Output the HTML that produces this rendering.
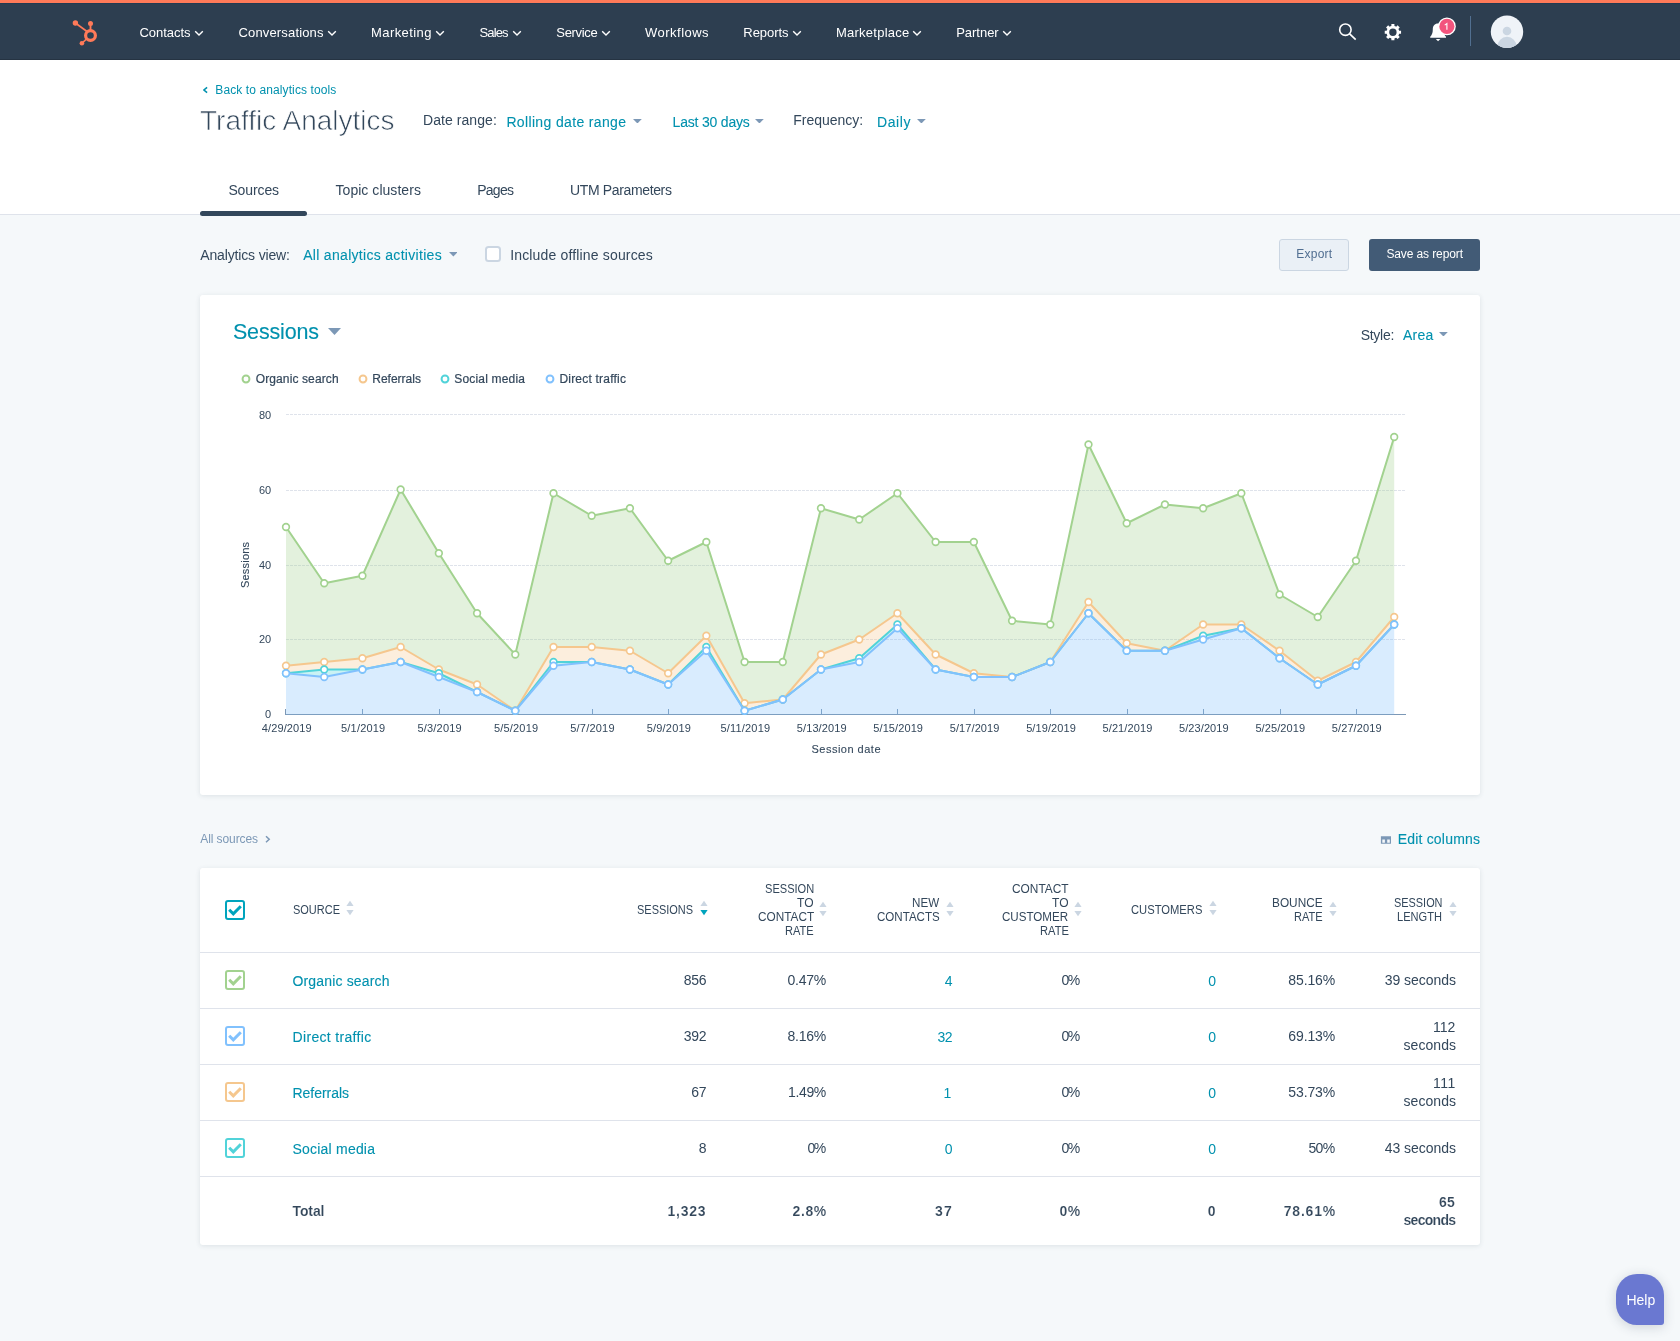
<!DOCTYPE html>
<html><head><meta charset="utf-8"><title>Traffic Analytics</title>
<style>
html,body{margin:0;padding:0}
body{width:1680px;height:1341px;background:#f5f8fa;position:relative;overflow:hidden;font-family:"Liberation Sans",sans-serif}
.t{position:absolute;white-space:nowrap;font-family:"Liberation Sans",sans-serif}
</style></head><body><div id="w" style="position:absolute;left:0;top:0;width:1680px;height:1341px;will-change:transform">
<div style="position:absolute;left:0;top:0;width:1680px;height:3px;background:#ff7a59"></div>
<div style="position:absolute;left:0;top:3px;width:1680px;height:57px;background:#2d3e50"></div>
<div style="position:absolute;left:0;top:3px;width:1680px;height:1px;background:#223a52"></div>
<div style="position:absolute;left:0;top:59px;width:1680px;height:1px;background:#253342"></div>
<svg style="position:absolute;left:60px;top:0" width="60" height="60" viewBox="60 0 60 60">
<g fill="#ff7a59" stroke="none">
<circle cx="75.4" cy="23" r="2.7"/><circle cx="90.5" cy="23.4" r="2.5"/><circle cx="81.9" cy="43.3" r="2.3"/>
</g>
<g stroke="#ff7a59" fill="none">
<circle cx="90.5" cy="35.5" r="4.9" stroke-width="3.2"/>
<line x1="75.4" y1="23" x2="87" y2="31.5" stroke-width="1.7"/>
<line x1="90.5" y1="23.4" x2="90.5" y2="30" stroke-width="1.9"/>
<line x1="81.9" y1="43.3" x2="86.5" y2="39" stroke-width="1.7"/>
</g></svg>
<div class="t" style="left:139.50px;top:23.60px;font-size:13px;line-height:17px;color:#ffffff;letter-spacing:-0.043px;">Contacts</div>
<svg style="position:absolute;left:194px;top:29px" width="10" height="8" viewBox="0 0 10 8"><path d="M1.2 2.2 L5 6 L8.8 2.2" fill="none" stroke="#ffffff" stroke-width="1.4"/></svg>
<div class="t" style="left:238.50px;top:23.60px;font-size:13px;line-height:17px;color:#ffffff;letter-spacing:0.159px;">Conversations</div>
<svg style="position:absolute;left:327px;top:29px" width="10" height="8" viewBox="0 0 10 8"><path d="M1.2 2.2 L5 6 L8.8 2.2" fill="none" stroke="#ffffff" stroke-width="1.4"/></svg>
<div class="t" style="left:371.00px;top:23.60px;font-size:13px;line-height:17px;color:#ffffff;letter-spacing:0.427px;">Marketing</div>
<svg style="position:absolute;left:435px;top:29px" width="10" height="8" viewBox="0 0 10 8"><path d="M1.2 2.2 L5 6 L8.8 2.2" fill="none" stroke="#ffffff" stroke-width="1.4"/></svg>
<div class="t" style="left:479.50px;top:23.60px;font-size:13px;line-height:17px;color:#ffffff;letter-spacing:-0.878px;">Sales</div>
<svg style="position:absolute;left:512px;top:29px" width="10" height="8" viewBox="0 0 10 8"><path d="M1.2 2.2 L5 6 L8.8 2.2" fill="none" stroke="#ffffff" stroke-width="1.4"/></svg>
<div class="t" style="left:556.30px;top:23.60px;font-size:13px;line-height:17px;color:#ffffff;letter-spacing:-0.326px;">Service</div>
<svg style="position:absolute;left:601.2px;top:29px" width="10" height="8" viewBox="0 0 10 8"><path d="M1.2 2.2 L5 6 L8.8 2.2" fill="none" stroke="#ffffff" stroke-width="1.4"/></svg>
<div class="t" style="left:645.00px;top:23.60px;font-size:13px;line-height:17px;color:#ffffff;letter-spacing:0.486px;">Workflows</div>
<div class="t" style="left:743.30px;top:23.60px;font-size:13px;line-height:17px;color:#ffffff;letter-spacing:-0.052px;">Reports</div>
<svg style="position:absolute;left:792.2px;top:29px" width="10" height="8" viewBox="0 0 10 8"><path d="M1.2 2.2 L5 6 L8.8 2.2" fill="none" stroke="#ffffff" stroke-width="1.4"/></svg>
<div class="t" style="left:836.00px;top:23.60px;font-size:13px;line-height:17px;color:#ffffff;letter-spacing:0.239px;">Marketplace</div>
<svg style="position:absolute;left:912.4px;top:29px" width="10" height="8" viewBox="0 0 10 8"><path d="M1.2 2.2 L5 6 L8.8 2.2" fill="none" stroke="#ffffff" stroke-width="1.4"/></svg>
<div class="t" style="left:956.20px;top:23.60px;font-size:13px;line-height:17px;color:#ffffff;letter-spacing:-0.021px;">Partner</div>
<svg style="position:absolute;left:1002.2px;top:29px" width="10" height="8" viewBox="0 0 10 8"><path d="M1.2 2.2 L5 6 L8.8 2.2" fill="none" stroke="#ffffff" stroke-width="1.4"/></svg>
<svg style="position:absolute;left:1330px;top:15px" width="34" height="34" viewBox="1330 15 34 34">
<circle cx="1345.400" cy="29.700" r="5.700" fill="none" stroke="#fff" stroke-width="1.600"/>
<line x1="1349.400" y1="33.700" x2="1355.700" y2="39.600" stroke="#fff" stroke-width="1.700" stroke-linecap="butt"/></svg>
<svg style="position:absolute;left:1380px;top:20px" width="26" height="26" viewBox="1380 20 26 26"><path d="M1390.45 26.29 L1391.36 25.99 L1391.39 24.04 L1394.41 24.04 L1394.44 25.99 L1395.35 26.29 L1395.35 26.29 L1396.20 26.72 L1397.61 25.36 L1399.74 27.49 L1398.38 28.90 L1398.81 29.75 L1398.81 29.75 L1399.11 30.66 L1401.06 30.69 L1401.06 33.71 L1399.11 33.74 L1398.81 34.65 L1398.81 34.65 L1398.38 35.50 L1399.74 36.91 L1397.61 39.04 L1396.20 37.68 L1395.35 38.11 L1395.35 38.11 L1394.44 38.41 L1394.41 40.36 L1391.39 40.36 L1391.36 38.41 L1390.45 38.11 L1390.45 38.11 L1389.60 37.68 L1388.19 39.04 L1386.06 36.91 L1387.42 35.50 L1386.99 34.65 L1386.99 34.65 L1386.69 33.74 L1384.74 33.71 L1384.74 30.69 L1386.69 30.66 L1386.99 29.75 L1386.99 29.75 L1387.42 28.90 L1386.06 27.49 L1388.19 25.36 L1389.60 26.72 L1390.45 26.29Z M1389.20 32.20 a3.7 3.7 0 1 0 7.4 0 a3.7 3.7 0 1 0 -7.4 0Z" fill="#fff" fill-rule="evenodd"/></svg>
<svg style="position:absolute;left:1425px;top:15px" width="34" height="34" viewBox="1425 15 34 34">
<path d="M1438.1 23.6 c-3.6 0 -5.3 2.7 -5.3 5.8 c0 3.6 -1 5.6 -2.6 7.3 l0 1 l15.8 0 l0 -1 c-1.6 -1.7 -2.6 -3.700 -2.6 -7.3 c0 -3.1 -1.7 -5.8 -5.3 -5.8z" fill="#fff"/>
<path d="M1435.8 39 l4.6 0 l-2.3 2.300z" fill="#fff"/>
<circle cx="1446.9" cy="26.400" r="8.900" fill="#fff"/>
<circle cx="1446.9" cy="26.400" r="7.600" fill="#f2547d"/>
<path d="M1444.700 25.100 L1446.900 23.600 L1446.900 29.700" fill="none" stroke="#fff" stroke-width="1.100" stroke-linejoin="miter"/>
</svg>
<div style="position:absolute;left:1470px;top:16px;width:1px;height:30px;background:#516f90"></div>
<svg style="position:absolute;left:1490px;top:15px" width="34" height="34" viewBox="1490 15 34 34">
<defs><clipPath id="av"><circle cx="1507" cy="31.700" r="16.2"/></clipPath></defs>
<circle cx="1507" cy="31.700" r="16.2" fill="#eff3f8"/>
<g clip-path="url(#av)" fill="#cbd6e2"><circle cx="1507" cy="31" r="4.300"/><ellipse cx="1507" cy="46.600" rx="9.600" ry="9.800"/></g>
</svg>
<div style="position:absolute;left:0;top:60px;width:1680px;height:154px;background:#fff;border-bottom:1px solid #dfe3eb"></div>
<svg style="position:absolute;left:203px;top:85px" width="8" height="10" viewBox="0 0 8 10"><path d="M4.100 2.300 L0.900 5 L4.100 7.700" fill="none" stroke="#0091ae" stroke-width="1.600"/></svg>
<div class="t" style="left:215.30px;top:81.64px;font-size:12px;line-height:16px;color:#0091ae;letter-spacing:0.103px;">Back to analytics tools</div>
<div class="t" style="left:200.00px;top:102.50px;font-size:28px;line-height:36px;color:#33475b;letter-spacing:-0.001px;-webkit-text-stroke:0.7px #fff;">Traffic Analytics</div>
<div class="t" style="left:423.00px;top:111.15px;font-size:14px;line-height:18px;color:#33475b;letter-spacing:0.064px;">Date range:</div>
<div class="t" style="left:506.40px;top:113.15px;font-size:14px;line-height:18px;color:#0091ae;letter-spacing:0.351px;-webkit-text-stroke:0.1px #0091ae;">Rolling date range</div>
<svg style="position:absolute;left:633.1px;top:118.9px" width="8.8" height="4.5" viewBox="0 0 8.8 4.5"><path d="M0 0 L8.8 0 L4.4 4.5Z" fill="#7c98b6"/></svg>
<div class="t" style="left:672.60px;top:113.15px;font-size:14px;line-height:18px;color:#0091ae;letter-spacing:-0.198px;-webkit-text-stroke:0.1px #0091ae;">Last 30 days</div>
<svg style="position:absolute;left:755.2px;top:118.9px" width="8.8" height="4.5" viewBox="0 0 8.8 4.5"><path d="M0 0 L8.8 0 L4.4 4.5Z" fill="#7c98b6"/></svg>
<div class="t" style="left:793.20px;top:111.15px;font-size:14px;line-height:18px;color:#33475b;letter-spacing:-0.003px;">Frequency:</div>
<div class="t" style="left:877.00px;top:113.15px;font-size:14px;line-height:18px;color:#0091ae;letter-spacing:0.595px;-webkit-text-stroke:0.1px #0091ae;">Daily</div>
<svg style="position:absolute;left:917.1px;top:118.9px" width="8.8" height="4.5" viewBox="0 0 8.8 4.5"><path d="M0 0 L8.8 0 L4.4 4.5Z" fill="#7c98b6"/></svg>
<div class="t" style="left:228.40px;top:181.15px;font-size:14px;line-height:18px;color:#33475b;letter-spacing:-0.109px;">Sources</div>
<div class="t" style="left:335.50px;top:181.15px;font-size:14px;line-height:18px;color:#33475b;letter-spacing:0.045px;">Topic clusters</div>
<div class="t" style="left:477.20px;top:181.15px;font-size:14px;line-height:18px;color:#33475b;letter-spacing:-0.722px;">Pages</div>
<div class="t" style="left:570.00px;top:181.15px;font-size:14px;line-height:18px;color:#33475b;letter-spacing:-0.359px;">UTM Parameters</div>
<div style="position:absolute;left:200px;top:211px;width:107px;height:5px;border-radius:2.5px;background:#33475b"></div>
<div class="t" style="left:200.20px;top:246.25px;font-size:14px;line-height:18px;color:#33475b;letter-spacing:-0.144px;">Analytics view:</div>
<div class="t" style="left:303.20px;top:246.25px;font-size:14px;line-height:18px;color:#0091ae;letter-spacing:0.305px;-webkit-text-stroke:0.1px #0091ae;">All analytics activities</div>
<svg style="position:absolute;left:448.5px;top:252.3px" width="8.8" height="4.5" viewBox="0 0 8.8 4.5"><path d="M0 0 L8.8 0 L4.4 4.5Z" fill="#7c98b6"/></svg>
<div style="position:absolute;left:485px;top:246px;width:12px;height:12px;border:2px solid #cbd6e2;border-radius:3.5px;background:#fff"></div>
<div class="t" style="left:510.20px;top:246.25px;font-size:14px;line-height:18px;color:#33475b;letter-spacing:0.161px;">Include offline sources</div>
<div style="position:absolute;left:1279px;top:239px;width:68px;height:30px;border:1px solid #cbd6e2;border-radius:3px;background:#eaf0f6"></div>
<div class="t" style="left:1296.30px;top:246.04px;font-size:12px;line-height:16px;color:#506e91;letter-spacing:0.224px;">Export</div>
<div style="position:absolute;left:1369px;top:239px;width:111px;height:32px;border-radius:3px;background:#425b76"></div>
<div class="t" style="left:1386.40px;top:246.04px;font-size:12px;line-height:16px;color:#ffffff;letter-spacing:-0.110px;">Save as report</div>
<div style="position:absolute;left:200px;top:295px;width:1280px;height:500px;background:#fff;border-radius:3px;box-shadow:0 1px 5px rgba(45,62,80,0.12)"></div>
<div class="t" style="left:232.90px;top:318.25px;font-size:21.5px;line-height:28px;color:#0091ae;letter-spacing:-0.150px;-webkit-text-stroke:0.12px #0091ae;">Sessions</div>
<svg style="position:absolute;left:327.7px;top:328px" width="13" height="7" viewBox="0 0 13 7"><path d="M0 0 L13 0 L6.5 7Z" fill="#7c98b6"/></svg>
<div class="t" style="left:1360.70px;top:325.75px;font-size:14px;line-height:18px;color:#33475b;letter-spacing:-0.283px;">Style:</div>
<div class="t" style="left:1403.00px;top:325.75px;font-size:14px;line-height:18px;color:#0091ae;letter-spacing:0.239px;-webkit-text-stroke:0.1px #0091ae;">Area</div>
<svg style="position:absolute;left:1439.2px;top:331.8px" width="8.8" height="4.5" viewBox="0 0 8.8 4.5"><path d="M0 0 L8.8 0 L4.4 4.5Z" fill="#7c98b6"/></svg>
<svg style="position:absolute;left:240.3px;top:373px" width="12" height="12" viewBox="0 0 12 12"><circle cx="6" cy="6" r="3.45" fill="#fff" stroke="#a2d28f" stroke-width="1.950"/></svg>
<div class="t" style="left:255.70px;top:370.74px;font-size:12px;line-height:16px;color:#33475b;letter-spacing:0.118px;-webkit-text-stroke:0.2px #33475b;">Organic search</div>
<svg style="position:absolute;left:356.9px;top:373px" width="12" height="12" viewBox="0 0 12 12"><circle cx="6" cy="6" r="3.45" fill="#fff" stroke="#f5c78e" stroke-width="1.950"/></svg>
<div class="t" style="left:372.30px;top:370.74px;font-size:12px;line-height:16px;color:#33475b;letter-spacing:-0.011px;-webkit-text-stroke:0.2px #33475b;">Referrals</div>
<svg style="position:absolute;left:439.1px;top:373px" width="12" height="12" viewBox="0 0 12 12"><circle cx="6" cy="6" r="3.45" fill="#fff" stroke="#51d3d9" stroke-width="1.950"/></svg>
<div class="t" style="left:454.30px;top:370.74px;font-size:12px;line-height:16px;color:#33475b;letter-spacing:0.172px;-webkit-text-stroke:0.2px #33475b;">Social media</div>
<svg style="position:absolute;left:544px;top:373px" width="12" height="12" viewBox="0 0 12 12"><circle cx="6" cy="6" r="3.45" fill="#fff" stroke="#81c1fd" stroke-width="1.950"/></svg>
<div class="t" style="left:559.40px;top:370.74px;font-size:12px;line-height:16px;color:#33475b;letter-spacing:0.216px;-webkit-text-stroke:0.2px #33475b;">Direct traffic</div>
<svg style="position:absolute;left:0;top:400px" width="1680" height="360" viewBox="0 400 1680 360">
<line x1="286" x2="1406" y1="639.5" y2="639.5" stroke="#dfe3eb" stroke-width="1" stroke-dasharray="3,1"/>
<line x1="286" x2="1406" y1="565.5" y2="565.5" stroke="#dfe3eb" stroke-width="1" stroke-dasharray="3,1"/>
<line x1="286" x2="1406" y1="490.5" y2="490.5" stroke="#dfe3eb" stroke-width="1" stroke-dasharray="3,1"/>
<line x1="286" x2="1406" y1="414.5" y2="414.5" stroke="#dfe3eb" stroke-width="1" stroke-dasharray="3,1"/>
<line x1="285" x2="1406" y1="714.5" y2="714.5" stroke="#7c98b6" stroke-width="1"/>
<line x1="285.5" x2="285.5" y1="709" y2="715" stroke="#7c98b6" stroke-width="1"/>
<line x1="362.5" x2="362.5" y1="709" y2="715" stroke="#7c98b6" stroke-width="1"/>
<line x1="439.5" x2="439.5" y1="709" y2="715" stroke="#7c98b6" stroke-width="1"/>
<line x1="515.5" x2="515.5" y1="709" y2="715" stroke="#7c98b6" stroke-width="1"/>
<line x1="592.5" x2="592.5" y1="709" y2="715" stroke="#7c98b6" stroke-width="1"/>
<line x1="668.5" x2="668.5" y1="709" y2="715" stroke="#7c98b6" stroke-width="1"/>
<line x1="745.5" x2="745.5" y1="709" y2="715" stroke="#7c98b6" stroke-width="1"/>
<line x1="821.5" x2="821.5" y1="709" y2="715" stroke="#7c98b6" stroke-width="1"/>
<line x1="897.5" x2="897.5" y1="709" y2="715" stroke="#7c98b6" stroke-width="1"/>
<line x1="974.5" x2="974.5" y1="709" y2="715" stroke="#7c98b6" stroke-width="1"/>
<line x1="1050.5" x2="1050.5" y1="709" y2="715" stroke="#7c98b6" stroke-width="1"/>
<line x1="1127.5" x2="1127.5" y1="709" y2="715" stroke="#7c98b6" stroke-width="1"/>
<line x1="1203.5" x2="1203.5" y1="709" y2="715" stroke="#7c98b6" stroke-width="1"/>
<line x1="1280.5" x2="1280.5" y1="709" y2="715" stroke="#7c98b6" stroke-width="1"/>
<line x1="1356.5" x2="1356.5" y1="709" y2="715" stroke="#7c98b6" stroke-width="1"/>
<path d="M286.00 527.00 L324.21 583.25 L362.43 575.75 L400.64 489.50 L438.86 553.25 L477.07 613.25 L515.28 654.50 L553.50 493.25 L591.71 515.75 L629.92 508.25 L668.14 560.75 L706.35 542.00 L744.57 662.00 L782.78 662.00 L820.99 508.25 L859.21 519.50 L897.42 493.25 L935.63 542.00 L973.85 542.00 L1012.06 620.75 L1050.28 624.50 L1088.49 444.50 L1126.70 523.25 L1164.92 504.50 L1203.13 508.25 L1241.34 493.25 L1279.56 594.50 L1317.77 617.00 L1355.99 560.75 L1394.20 437.00 L1394.20 617.00 L1355.99 662.00 L1317.77 680.75 L1279.56 650.75 L1241.34 624.50 L1203.13 624.50 L1164.92 650.75 L1126.70 643.25 L1088.49 602.00 L1050.28 662.00 L1012.06 677.00 L973.85 673.25 L935.63 654.50 L897.42 613.25 L859.21 639.50 L820.99 654.50 L782.78 699.50 L744.57 703.25 L706.35 635.75 L668.14 673.25 L629.92 650.75 L591.71 647.00 L553.50 647.00 L515.28 710.75 L477.07 684.50 L438.86 669.50 L400.64 647.00 L362.43 658.25 L324.21 662.00 L286.00 665.75Z" fill="#a2d28f" fill-opacity="0.3"/>
<path d="M286.00 527.00 L324.21 583.25 L362.43 575.75 L400.64 489.50 L438.86 553.25 L477.07 613.25 L515.28 654.50 L553.50 493.25 L591.71 515.75 L629.92 508.25 L668.14 560.75 L706.35 542.00 L744.57 662.00 L782.78 662.00 L820.99 508.25 L859.21 519.50 L897.42 493.25 L935.63 542.00 L973.85 542.00 L1012.06 620.75 L1050.28 624.50 L1088.49 444.50 L1126.70 523.25 L1164.92 504.50 L1203.13 508.25 L1241.34 493.25 L1279.56 594.50 L1317.77 617.00 L1355.99 560.75 L1394.20 437.00" fill="none" stroke="#a2d28f" stroke-width="2" stroke-linejoin="round" stroke-linecap="round"/>
<circle cx="286.00" cy="527.00" r="3.35" fill="#fff" stroke="#a2d28f" stroke-width="1.65"/>
<circle cx="324.21" cy="583.25" r="3.35" fill="#fff" stroke="#a2d28f" stroke-width="1.65"/>
<circle cx="362.43" cy="575.75" r="3.35" fill="#fff" stroke="#a2d28f" stroke-width="1.65"/>
<circle cx="400.64" cy="489.50" r="3.35" fill="#fff" stroke="#a2d28f" stroke-width="1.65"/>
<circle cx="438.86" cy="553.25" r="3.35" fill="#fff" stroke="#a2d28f" stroke-width="1.65"/>
<circle cx="477.07" cy="613.25" r="3.35" fill="#fff" stroke="#a2d28f" stroke-width="1.65"/>
<circle cx="515.28" cy="654.50" r="3.35" fill="#fff" stroke="#a2d28f" stroke-width="1.65"/>
<circle cx="553.50" cy="493.25" r="3.35" fill="#fff" stroke="#a2d28f" stroke-width="1.65"/>
<circle cx="591.71" cy="515.75" r="3.35" fill="#fff" stroke="#a2d28f" stroke-width="1.65"/>
<circle cx="629.92" cy="508.25" r="3.35" fill="#fff" stroke="#a2d28f" stroke-width="1.65"/>
<circle cx="668.14" cy="560.75" r="3.35" fill="#fff" stroke="#a2d28f" stroke-width="1.65"/>
<circle cx="706.35" cy="542.00" r="3.35" fill="#fff" stroke="#a2d28f" stroke-width="1.65"/>
<circle cx="744.57" cy="662.00" r="3.35" fill="#fff" stroke="#a2d28f" stroke-width="1.65"/>
<circle cx="782.78" cy="662.00" r="3.35" fill="#fff" stroke="#a2d28f" stroke-width="1.65"/>
<circle cx="820.99" cy="508.25" r="3.35" fill="#fff" stroke="#a2d28f" stroke-width="1.65"/>
<circle cx="859.21" cy="519.50" r="3.35" fill="#fff" stroke="#a2d28f" stroke-width="1.65"/>
<circle cx="897.42" cy="493.25" r="3.35" fill="#fff" stroke="#a2d28f" stroke-width="1.65"/>
<circle cx="935.63" cy="542.00" r="3.35" fill="#fff" stroke="#a2d28f" stroke-width="1.65"/>
<circle cx="973.85" cy="542.00" r="3.35" fill="#fff" stroke="#a2d28f" stroke-width="1.65"/>
<circle cx="1012.06" cy="620.75" r="3.35" fill="#fff" stroke="#a2d28f" stroke-width="1.65"/>
<circle cx="1050.28" cy="624.50" r="3.35" fill="#fff" stroke="#a2d28f" stroke-width="1.65"/>
<circle cx="1088.49" cy="444.50" r="3.35" fill="#fff" stroke="#a2d28f" stroke-width="1.65"/>
<circle cx="1126.70" cy="523.25" r="3.35" fill="#fff" stroke="#a2d28f" stroke-width="1.65"/>
<circle cx="1164.92" cy="504.50" r="3.35" fill="#fff" stroke="#a2d28f" stroke-width="1.65"/>
<circle cx="1203.13" cy="508.25" r="3.35" fill="#fff" stroke="#a2d28f" stroke-width="1.65"/>
<circle cx="1241.34" cy="493.25" r="3.35" fill="#fff" stroke="#a2d28f" stroke-width="1.65"/>
<circle cx="1279.56" cy="594.50" r="3.35" fill="#fff" stroke="#a2d28f" stroke-width="1.65"/>
<circle cx="1317.77" cy="617.00" r="3.35" fill="#fff" stroke="#a2d28f" stroke-width="1.65"/>
<circle cx="1355.99" cy="560.75" r="3.35" fill="#fff" stroke="#a2d28f" stroke-width="1.65"/>
<circle cx="1394.20" cy="437.00" r="3.35" fill="#fff" stroke="#a2d28f" stroke-width="1.65"/>
<path d="M286.00 665.75 L324.21 662.00 L362.43 658.25 L400.64 647.00 L438.86 669.50 L477.07 684.50 L515.28 710.75 L553.50 647.00 L591.71 647.00 L629.92 650.75 L668.14 673.25 L706.35 635.75 L744.57 703.25 L782.78 699.50 L820.99 654.50 L859.21 639.50 L897.42 613.25 L935.63 654.50 L973.85 673.25 L1012.06 677.00 L1050.28 662.00 L1088.49 602.00 L1126.70 643.25 L1164.92 650.75 L1203.13 624.50 L1241.34 624.50 L1279.56 650.75 L1317.77 680.75 L1355.99 662.00 L1394.20 617.00 L1394.20 624.50 L1355.99 665.75 L1317.77 684.50 L1279.56 658.25 L1241.34 628.25 L1203.13 635.75 L1164.92 650.75 L1126.70 650.75 L1088.49 613.25 L1050.28 662.00 L1012.06 677.00 L973.85 677.00 L935.63 669.50 L897.42 624.50 L859.21 658.25 L820.99 669.50 L782.78 699.50 L744.57 710.75 L706.35 647.00 L668.14 684.50 L629.92 669.50 L591.71 662.00 L553.50 662.00 L515.28 710.75 L477.07 692.00 L438.86 673.25 L400.64 662.00 L362.43 669.50 L324.21 669.50 L286.00 673.25Z" fill="#f5c78e" fill-opacity="0.3"/>
<path d="M286.00 665.75 L324.21 662.00 L362.43 658.25 L400.64 647.00 L438.86 669.50 L477.07 684.50 L515.28 710.75 L553.50 647.00 L591.71 647.00 L629.92 650.75 L668.14 673.25 L706.35 635.75 L744.57 703.25 L782.78 699.50 L820.99 654.50 L859.21 639.50 L897.42 613.25 L935.63 654.50 L973.85 673.25 L1012.06 677.00 L1050.28 662.00 L1088.49 602.00 L1126.70 643.25 L1164.92 650.75 L1203.13 624.50 L1241.34 624.50 L1279.56 650.75 L1317.77 680.75 L1355.99 662.00 L1394.20 617.00" fill="none" stroke="#f5c78e" stroke-width="2" stroke-linejoin="round" stroke-linecap="round"/>
<circle cx="286.00" cy="665.75" r="3.35" fill="#fff" stroke="#f5c78e" stroke-width="1.65"/>
<circle cx="324.21" cy="662.00" r="3.35" fill="#fff" stroke="#f5c78e" stroke-width="1.65"/>
<circle cx="362.43" cy="658.25" r="3.35" fill="#fff" stroke="#f5c78e" stroke-width="1.65"/>
<circle cx="400.64" cy="647.00" r="3.35" fill="#fff" stroke="#f5c78e" stroke-width="1.65"/>
<circle cx="438.86" cy="669.50" r="3.35" fill="#fff" stroke="#f5c78e" stroke-width="1.65"/>
<circle cx="477.07" cy="684.50" r="3.35" fill="#fff" stroke="#f5c78e" stroke-width="1.65"/>
<circle cx="515.28" cy="710.75" r="3.35" fill="#fff" stroke="#f5c78e" stroke-width="1.65"/>
<circle cx="553.50" cy="647.00" r="3.35" fill="#fff" stroke="#f5c78e" stroke-width="1.65"/>
<circle cx="591.71" cy="647.00" r="3.35" fill="#fff" stroke="#f5c78e" stroke-width="1.65"/>
<circle cx="629.92" cy="650.75" r="3.35" fill="#fff" stroke="#f5c78e" stroke-width="1.65"/>
<circle cx="668.14" cy="673.25" r="3.35" fill="#fff" stroke="#f5c78e" stroke-width="1.65"/>
<circle cx="706.35" cy="635.75" r="3.35" fill="#fff" stroke="#f5c78e" stroke-width="1.65"/>
<circle cx="744.57" cy="703.25" r="3.35" fill="#fff" stroke="#f5c78e" stroke-width="1.65"/>
<circle cx="782.78" cy="699.50" r="3.35" fill="#fff" stroke="#f5c78e" stroke-width="1.65"/>
<circle cx="820.99" cy="654.50" r="3.35" fill="#fff" stroke="#f5c78e" stroke-width="1.65"/>
<circle cx="859.21" cy="639.50" r="3.35" fill="#fff" stroke="#f5c78e" stroke-width="1.65"/>
<circle cx="897.42" cy="613.25" r="3.35" fill="#fff" stroke="#f5c78e" stroke-width="1.65"/>
<circle cx="935.63" cy="654.50" r="3.35" fill="#fff" stroke="#f5c78e" stroke-width="1.65"/>
<circle cx="973.85" cy="673.25" r="3.35" fill="#fff" stroke="#f5c78e" stroke-width="1.65"/>
<circle cx="1012.06" cy="677.00" r="3.35" fill="#fff" stroke="#f5c78e" stroke-width="1.65"/>
<circle cx="1050.28" cy="662.00" r="3.35" fill="#fff" stroke="#f5c78e" stroke-width="1.65"/>
<circle cx="1088.49" cy="602.00" r="3.35" fill="#fff" stroke="#f5c78e" stroke-width="1.65"/>
<circle cx="1126.70" cy="643.25" r="3.35" fill="#fff" stroke="#f5c78e" stroke-width="1.65"/>
<circle cx="1164.92" cy="650.75" r="3.35" fill="#fff" stroke="#f5c78e" stroke-width="1.65"/>
<circle cx="1203.13" cy="624.50" r="3.35" fill="#fff" stroke="#f5c78e" stroke-width="1.65"/>
<circle cx="1241.34" cy="624.50" r="3.35" fill="#fff" stroke="#f5c78e" stroke-width="1.65"/>
<circle cx="1279.56" cy="650.75" r="3.35" fill="#fff" stroke="#f5c78e" stroke-width="1.65"/>
<circle cx="1317.77" cy="680.75" r="3.35" fill="#fff" stroke="#f5c78e" stroke-width="1.65"/>
<circle cx="1355.99" cy="662.00" r="3.35" fill="#fff" stroke="#f5c78e" stroke-width="1.65"/>
<circle cx="1394.20" cy="617.00" r="3.35" fill="#fff" stroke="#f5c78e" stroke-width="1.65"/>
<path d="M286.00 673.25 L324.21 669.50 L362.43 669.50 L400.64 662.00 L438.86 673.25 L477.07 692.00 L515.28 710.75 L553.50 662.00 L591.71 662.00 L629.92 669.50 L668.14 684.50 L706.35 647.00 L744.57 710.75 L782.78 699.50 L820.99 669.50 L859.21 658.25 L897.42 624.50 L935.63 669.50 L973.85 677.00 L1012.06 677.00 L1050.28 662.00 L1088.49 613.25 L1126.70 650.75 L1164.92 650.75 L1203.13 635.75 L1241.34 628.25 L1279.56 658.25 L1317.77 684.50 L1355.99 665.75 L1394.20 624.50 L1394.20 624.50 L1355.99 665.75 L1317.77 684.50 L1279.56 658.25 L1241.34 628.25 L1203.13 639.50 L1164.92 650.75 L1126.70 650.75 L1088.49 613.25 L1050.28 662.00 L1012.06 677.00 L973.85 677.00 L935.63 669.50 L897.42 628.25 L859.21 662.00 L820.99 669.50 L782.78 699.50 L744.57 710.75 L706.35 650.75 L668.14 684.50 L629.92 669.50 L591.71 662.00 L553.50 665.75 L515.28 710.75 L477.07 692.00 L438.86 677.00 L400.64 662.00 L362.43 669.50 L324.21 677.00 L286.00 673.25Z" fill="#51d3d9" fill-opacity="0.3"/>
<path d="M286.00 673.25 L324.21 669.50 L362.43 669.50 L400.64 662.00 L438.86 673.25 L477.07 692.00 L515.28 710.75 L553.50 662.00 L591.71 662.00 L629.92 669.50 L668.14 684.50 L706.35 647.00 L744.57 710.75 L782.78 699.50 L820.99 669.50 L859.21 658.25 L897.42 624.50 L935.63 669.50 L973.85 677.00 L1012.06 677.00 L1050.28 662.00 L1088.49 613.25 L1126.70 650.75 L1164.92 650.75 L1203.13 635.75 L1241.34 628.25 L1279.56 658.25 L1317.77 684.50 L1355.99 665.75 L1394.20 624.50" fill="none" stroke="#51d3d9" stroke-width="2" stroke-linejoin="round" stroke-linecap="round"/>
<circle cx="286.00" cy="673.25" r="3.35" fill="#fff" stroke="#51d3d9" stroke-width="1.65"/>
<circle cx="324.21" cy="669.50" r="3.35" fill="#fff" stroke="#51d3d9" stroke-width="1.65"/>
<circle cx="362.43" cy="669.50" r="3.35" fill="#fff" stroke="#51d3d9" stroke-width="1.65"/>
<circle cx="400.64" cy="662.00" r="3.35" fill="#fff" stroke="#51d3d9" stroke-width="1.65"/>
<circle cx="438.86" cy="673.25" r="3.35" fill="#fff" stroke="#51d3d9" stroke-width="1.65"/>
<circle cx="477.07" cy="692.00" r="3.35" fill="#fff" stroke="#51d3d9" stroke-width="1.65"/>
<circle cx="515.28" cy="710.75" r="3.35" fill="#fff" stroke="#51d3d9" stroke-width="1.65"/>
<circle cx="553.50" cy="662.00" r="3.35" fill="#fff" stroke="#51d3d9" stroke-width="1.65"/>
<circle cx="591.71" cy="662.00" r="3.35" fill="#fff" stroke="#51d3d9" stroke-width="1.65"/>
<circle cx="629.92" cy="669.50" r="3.35" fill="#fff" stroke="#51d3d9" stroke-width="1.65"/>
<circle cx="668.14" cy="684.50" r="3.35" fill="#fff" stroke="#51d3d9" stroke-width="1.65"/>
<circle cx="706.35" cy="647.00" r="3.35" fill="#fff" stroke="#51d3d9" stroke-width="1.65"/>
<circle cx="744.57" cy="710.75" r="3.35" fill="#fff" stroke="#51d3d9" stroke-width="1.65"/>
<circle cx="782.78" cy="699.50" r="3.35" fill="#fff" stroke="#51d3d9" stroke-width="1.65"/>
<circle cx="820.99" cy="669.50" r="3.35" fill="#fff" stroke="#51d3d9" stroke-width="1.65"/>
<circle cx="859.21" cy="658.25" r="3.35" fill="#fff" stroke="#51d3d9" stroke-width="1.65"/>
<circle cx="897.42" cy="624.50" r="3.35" fill="#fff" stroke="#51d3d9" stroke-width="1.65"/>
<circle cx="935.63" cy="669.50" r="3.35" fill="#fff" stroke="#51d3d9" stroke-width="1.65"/>
<circle cx="973.85" cy="677.00" r="3.35" fill="#fff" stroke="#51d3d9" stroke-width="1.65"/>
<circle cx="1012.06" cy="677.00" r="3.35" fill="#fff" stroke="#51d3d9" stroke-width="1.65"/>
<circle cx="1050.28" cy="662.00" r="3.35" fill="#fff" stroke="#51d3d9" stroke-width="1.65"/>
<circle cx="1088.49" cy="613.25" r="3.35" fill="#fff" stroke="#51d3d9" stroke-width="1.65"/>
<circle cx="1126.70" cy="650.75" r="3.35" fill="#fff" stroke="#51d3d9" stroke-width="1.65"/>
<circle cx="1164.92" cy="650.75" r="3.35" fill="#fff" stroke="#51d3d9" stroke-width="1.65"/>
<circle cx="1203.13" cy="635.75" r="3.35" fill="#fff" stroke="#51d3d9" stroke-width="1.65"/>
<circle cx="1241.34" cy="628.25" r="3.35" fill="#fff" stroke="#51d3d9" stroke-width="1.65"/>
<circle cx="1279.56" cy="658.25" r="3.35" fill="#fff" stroke="#51d3d9" stroke-width="1.65"/>
<circle cx="1317.77" cy="684.50" r="3.35" fill="#fff" stroke="#51d3d9" stroke-width="1.65"/>
<circle cx="1355.99" cy="665.75" r="3.35" fill="#fff" stroke="#51d3d9" stroke-width="1.65"/>
<circle cx="1394.20" cy="624.50" r="3.35" fill="#fff" stroke="#51d3d9" stroke-width="1.65"/>
<path d="M286.00 673.25 L324.21 677.00 L362.43 669.50 L400.64 662.00 L438.86 677.00 L477.07 692.00 L515.28 710.75 L553.50 665.75 L591.71 662.00 L629.92 669.50 L668.14 684.50 L706.35 650.75 L744.57 710.75 L782.78 699.50 L820.99 669.50 L859.21 662.00 L897.42 628.25 L935.63 669.50 L973.85 677.00 L1012.06 677.00 L1050.28 662.00 L1088.49 613.25 L1126.70 650.75 L1164.92 650.75 L1203.13 639.50 L1241.34 628.25 L1279.56 658.25 L1317.77 684.50 L1355.99 665.75 L1394.20 624.50 L1394.20 714.50 L1355.99 714.50 L1317.77 714.50 L1279.56 714.50 L1241.34 714.50 L1203.13 714.50 L1164.92 714.50 L1126.70 714.50 L1088.49 714.50 L1050.28 714.50 L1012.06 714.50 L973.85 714.50 L935.63 714.50 L897.42 714.50 L859.21 714.50 L820.99 714.50 L782.78 714.50 L744.57 714.50 L706.35 714.50 L668.14 714.50 L629.92 714.50 L591.71 714.50 L553.50 714.50 L515.28 714.50 L477.07 714.50 L438.86 714.50 L400.64 714.50 L362.43 714.50 L324.21 714.50 L286.00 714.50Z" fill="#81c1fd" fill-opacity="0.3"/>
<path d="M286.00 673.25 L324.21 677.00 L362.43 669.50 L400.64 662.00 L438.86 677.00 L477.07 692.00 L515.28 710.75 L553.50 665.75 L591.71 662.00 L629.92 669.50 L668.14 684.50 L706.35 650.75 L744.57 710.75 L782.78 699.50 L820.99 669.50 L859.21 662.00 L897.42 628.25 L935.63 669.50 L973.85 677.00 L1012.06 677.00 L1050.28 662.00 L1088.49 613.25 L1126.70 650.75 L1164.92 650.75 L1203.13 639.50 L1241.34 628.25 L1279.56 658.25 L1317.77 684.50 L1355.99 665.75 L1394.20 624.50" fill="none" stroke="#81c1fd" stroke-width="2" stroke-linejoin="round" stroke-linecap="round"/>
<circle cx="286.00" cy="673.25" r="3.35" fill="#fff" stroke="#81c1fd" stroke-width="1.65"/>
<circle cx="324.21" cy="677.00" r="3.35" fill="#fff" stroke="#81c1fd" stroke-width="1.65"/>
<circle cx="362.43" cy="669.50" r="3.35" fill="#fff" stroke="#81c1fd" stroke-width="1.65"/>
<circle cx="400.64" cy="662.00" r="3.35" fill="#fff" stroke="#81c1fd" stroke-width="1.65"/>
<circle cx="438.86" cy="677.00" r="3.35" fill="#fff" stroke="#81c1fd" stroke-width="1.65"/>
<circle cx="477.07" cy="692.00" r="3.35" fill="#fff" stroke="#81c1fd" stroke-width="1.65"/>
<circle cx="515.28" cy="710.75" r="3.35" fill="#fff" stroke="#81c1fd" stroke-width="1.65"/>
<circle cx="553.50" cy="665.75" r="3.35" fill="#fff" stroke="#81c1fd" stroke-width="1.65"/>
<circle cx="591.71" cy="662.00" r="3.35" fill="#fff" stroke="#81c1fd" stroke-width="1.65"/>
<circle cx="629.92" cy="669.50" r="3.35" fill="#fff" stroke="#81c1fd" stroke-width="1.65"/>
<circle cx="668.14" cy="684.50" r="3.35" fill="#fff" stroke="#81c1fd" stroke-width="1.65"/>
<circle cx="706.35" cy="650.75" r="3.35" fill="#fff" stroke="#81c1fd" stroke-width="1.65"/>
<circle cx="744.57" cy="710.75" r="3.35" fill="#fff" stroke="#81c1fd" stroke-width="1.65"/>
<circle cx="782.78" cy="699.50" r="3.35" fill="#fff" stroke="#81c1fd" stroke-width="1.65"/>
<circle cx="820.99" cy="669.50" r="3.35" fill="#fff" stroke="#81c1fd" stroke-width="1.65"/>
<circle cx="859.21" cy="662.00" r="3.35" fill="#fff" stroke="#81c1fd" stroke-width="1.65"/>
<circle cx="897.42" cy="628.25" r="3.35" fill="#fff" stroke="#81c1fd" stroke-width="1.65"/>
<circle cx="935.63" cy="669.50" r="3.35" fill="#fff" stroke="#81c1fd" stroke-width="1.65"/>
<circle cx="973.85" cy="677.00" r="3.35" fill="#fff" stroke="#81c1fd" stroke-width="1.65"/>
<circle cx="1012.06" cy="677.00" r="3.35" fill="#fff" stroke="#81c1fd" stroke-width="1.65"/>
<circle cx="1050.28" cy="662.00" r="3.35" fill="#fff" stroke="#81c1fd" stroke-width="1.65"/>
<circle cx="1088.49" cy="613.25" r="3.35" fill="#fff" stroke="#81c1fd" stroke-width="1.65"/>
<circle cx="1126.70" cy="650.75" r="3.35" fill="#fff" stroke="#81c1fd" stroke-width="1.65"/>
<circle cx="1164.92" cy="650.75" r="3.35" fill="#fff" stroke="#81c1fd" stroke-width="1.65"/>
<circle cx="1203.13" cy="639.50" r="3.35" fill="#fff" stroke="#81c1fd" stroke-width="1.65"/>
<circle cx="1241.34" cy="628.25" r="3.35" fill="#fff" stroke="#81c1fd" stroke-width="1.65"/>
<circle cx="1279.56" cy="658.25" r="3.35" fill="#fff" stroke="#81c1fd" stroke-width="1.65"/>
<circle cx="1317.77" cy="684.50" r="3.35" fill="#fff" stroke="#81c1fd" stroke-width="1.65"/>
<circle cx="1355.99" cy="665.75" r="3.35" fill="#fff" stroke="#81c1fd" stroke-width="1.65"/>
<circle cx="1394.20" cy="624.50" r="3.35" fill="#fff" stroke="#81c1fd" stroke-width="1.65"/>
</svg>
<div class="t" style="left:265.08px;top:707.19px;font-size:11px;line-height:14px;color:#33475b;">0</div>
<div class="t" style="left:258.97px;top:632.19px;font-size:11px;line-height:14px;color:#33475b;">20</div>
<div class="t" style="left:258.97px;top:558.19px;font-size:11px;line-height:14px;color:#33475b;">40</div>
<div class="t" style="left:258.97px;top:483.19px;font-size:11px;line-height:14px;color:#33475b;">60</div>
<div class="t" style="left:258.97px;top:408.09px;font-size:11px;line-height:14px;color:#33475b;">80</div>
<div class="t" style="left:261.85px;top:721.19px;font-size:11px;line-height:14px;color:#33475b;letter-spacing:0.095px;">4/29/2019</div>
<div class="t" style="left:341.03px;top:721.19px;font-size:11px;line-height:14px;color:#33475b;letter-spacing:0.197px;">5/1/2019</div>
<div class="t" style="left:417.46px;top:721.19px;font-size:11px;line-height:14px;color:#33475b;letter-spacing:0.197px;">5/3/2019</div>
<div class="t" style="left:493.88px;top:721.19px;font-size:11px;line-height:14px;color:#33475b;letter-spacing:0.197px;">5/5/2019</div>
<div class="t" style="left:570.31px;top:721.19px;font-size:11px;line-height:14px;color:#33475b;letter-spacing:0.197px;">5/7/2019</div>
<div class="t" style="left:646.74px;top:721.19px;font-size:11px;line-height:14px;color:#33475b;letter-spacing:0.197px;">5/9/2019</div>
<div class="t" style="left:720.42px;top:721.19px;font-size:11px;line-height:14px;color:#33475b;letter-spacing:0.197px;">5/11/2019</div>
<div class="t" style="left:796.84px;top:721.19px;font-size:11px;line-height:14px;color:#33475b;letter-spacing:0.095px;">5/13/2019</div>
<div class="t" style="left:873.27px;top:721.19px;font-size:11px;line-height:14px;color:#33475b;letter-spacing:0.095px;">5/15/2019</div>
<div class="t" style="left:949.70px;top:721.19px;font-size:11px;line-height:14px;color:#33475b;letter-spacing:0.095px;">5/17/2019</div>
<div class="t" style="left:1026.13px;top:721.19px;font-size:11px;line-height:14px;color:#33475b;letter-spacing:0.095px;">5/19/2019</div>
<div class="t" style="left:1102.55px;top:721.19px;font-size:11px;line-height:14px;color:#33475b;letter-spacing:0.095px;">5/21/2019</div>
<div class="t" style="left:1178.98px;top:721.19px;font-size:11px;line-height:14px;color:#33475b;letter-spacing:0.095px;">5/23/2019</div>
<div class="t" style="left:1255.41px;top:721.19px;font-size:11px;line-height:14px;color:#33475b;letter-spacing:0.095px;">5/25/2019</div>
<div class="t" style="left:1331.84px;top:721.19px;font-size:11px;line-height:14px;color:#33475b;letter-spacing:0.095px;">5/27/2019</div>
<div class="t" style="left:811.50px;top:741.69px;font-size:11px;line-height:14px;color:#33475b;letter-spacing:0.491px;-webkit-text-stroke:0.1px #33475b;">Session date</div>
<div class="t" style="left:222px;top:556.5px;width:46px;height:16px;line-height:16px;font-size:11px;color:#33475b;text-align:center;transform:rotate(-90deg);letter-spacing:0.2px;-webkit-text-stroke:0.1px #33475b">Sessions</div>
<div class="t" style="left:200.25px;top:830.74px;font-size:12px;line-height:16px;color:#7c98b6;letter-spacing:-0.089px;">All sources</div>
<svg style="position:absolute;left:264px;top:834px" width="8" height="10" viewBox="0 0 8 10"><path d="M2 2.200 L5.2 5.2 L2 8.2" fill="none" stroke="#7c98b6" stroke-width="1.5"/></svg>
<svg style="position:absolute;left:1380px;top:835px" width="12" height="10" viewBox="1380 835 12 10"><path d="M1380.900 836.200 h10.100 v7.600 h-10.100z M1382.300 839.500 v3.200 h2.600 v-3.200z M1387.200 839.500 v3.200 h2.600 v-3.200z" fill="#7c98b6" fill-rule="evenodd"/></svg>
<div class="t" style="left:1397.70px;top:829.90px;font-size:14px;line-height:18px;color:#0091ae;letter-spacing:0.195px;-webkit-text-stroke:0.12px #0091ae;">Edit columns</div>
<div style="position:absolute;left:200px;top:868px;width:1280px;height:377px;background:#fff;border-radius:3px;box-shadow:0 1px 5px rgba(45,62,80,0.12)"></div>
<div style="position:absolute;left:200px;top:952px;width:1280px;height:1px;background:#dfe3eb"></div>
<div style="position:absolute;left:200px;top:1008px;width:1280px;height:1px;background:#dfe3eb"></div>
<div style="position:absolute;left:200px;top:1064px;width:1280px;height:1px;background:#dfe3eb"></div>
<div style="position:absolute;left:200px;top:1120px;width:1280px;height:1px;background:#dfe3eb"></div>
<div style="position:absolute;left:200px;top:1176px;width:1280px;height:1px;background:#dfe3eb"></div>
<div style="position:absolute;left:225px;top:900px;width:16px;height:16px;border:2px solid #00a4bd;border-radius:3px;background:#fff"></div>
<svg style="position:absolute;left:225px;top:900px" width="20" height="20" viewBox="0 0 20 20"><path d="M4.2 9.7 L8.3 13.8 L15.8 6.3" fill="none" stroke="#00a4bd" stroke-width="3"/></svg>
<div style="position:absolute;left:225px;top:970px;width:16px;height:16px;border:2px solid #a2d28f;border-radius:3px;background:#fff"></div>
<svg style="position:absolute;left:225px;top:970px" width="20" height="20" viewBox="0 0 20 20"><path d="M4.2 9.7 L8.3 13.8 L15.8 6.3" fill="none" stroke="#a2d28f" stroke-width="3"/></svg>
<div style="position:absolute;left:225px;top:1026px;width:16px;height:16px;border:2px solid #81c1fd;border-radius:3px;background:#fff"></div>
<svg style="position:absolute;left:225px;top:1026px" width="20" height="20" viewBox="0 0 20 20"><path d="M4.2 9.7 L8.3 13.8 L15.8 6.3" fill="none" stroke="#81c1fd" stroke-width="3"/></svg>
<div style="position:absolute;left:225px;top:1082px;width:16px;height:16px;border:2px solid #f5c78e;border-radius:3px;background:#fff"></div>
<svg style="position:absolute;left:225px;top:1082px" width="20" height="20" viewBox="0 0 20 20"><path d="M4.2 9.7 L8.3 13.8 L15.8 6.3" fill="none" stroke="#f5c78e" stroke-width="3"/></svg>
<div style="position:absolute;left:225px;top:1138px;width:16px;height:16px;border:2px solid #51d3d9;border-radius:3px;background:#fff"></div>
<svg style="position:absolute;left:225px;top:1138px" width="20" height="20" viewBox="0 0 20 20"><path d="M4.2 9.7 L8.3 13.8 L15.8 6.3" fill="none" stroke="#51d3d9" stroke-width="3"/></svg>
<div class="t" style="left:292.50px;top:901.74px;font-size:12px;line-height:16px;color:#33475b;transform:scaleX(0.9155);transform-origin:0 0;">SOURCE</div>
<svg style="position:absolute;left:345.8px;top:900px" width="9" height="17" viewBox="0 0 9 17"><path d="M0.400 6 L4 0.700 L7.600 6Z" fill="#cbd6e2"/><path d="M0.400 9.900 L4 15.200 L7.600 9.900Z" fill="#cbd6e2"/></svg>
<div class="t" style="left:637.40px;top:901.84px;font-size:12px;line-height:16px;color:#33475b;transform:scaleX(0.9143);transform-origin:0 0;">SESSIONS</div>
<svg style="position:absolute;left:699.5px;top:900px" width="9" height="17" viewBox="0 0 9 17"><path d="M0.400 6 L4 0.700 L7.600 6Z" fill="#cbd6e2"/><path d="M0.400 9.900 L4 15.200 L7.600 9.900Z" fill="#00a4bd"/></svg>
<div class="t" style="left:764.60px;top:880.84px;font-size:12px;line-height:16px;color:#33475b;transform:scaleX(0.9222);transform-origin:0 0;">SESSION</div>
<div class="t" style="left:797.30px;top:894.94px;font-size:12px;line-height:16px;color:#33475b;transform:scaleX(1.0029);transform-origin:0 0;">TO</div>
<div class="t" style="left:757.70px;top:909.04px;font-size:12px;line-height:16px;color:#33475b;transform:scaleX(0.9823);transform-origin:0 0;">CONTACT</div>
<div class="t" style="left:785.10px;top:923.14px;font-size:12px;line-height:16px;color:#33475b;transform:scaleX(0.9224);transform-origin:0 0;">RATE</div>
<svg style="position:absolute;left:819.4px;top:901px" width="9" height="17" viewBox="0 0 9 17"><path d="M0.400 6 L4 0.700 L7.600 6Z" fill="#cbd6e2"/><path d="M0.400 9.900 L4 15.200 L7.600 9.900Z" fill="#cbd6e2"/></svg>
<div class="t" style="left:912.30px;top:894.94px;font-size:12px;line-height:16px;color:#33475b;transform:scaleX(0.9680);transform-origin:0 0;">NEW</div>
<div class="t" style="left:876.70px;top:909.04px;font-size:12px;line-height:16px;color:#33475b;transform:scaleX(0.9630);transform-origin:0 0;">CONTACTS</div>
<svg style="position:absolute;left:945.6px;top:901px" width="9" height="17" viewBox="0 0 9 17"><path d="M0.400 6 L4 0.700 L7.600 6Z" fill="#cbd6e2"/><path d="M0.400 9.900 L4 15.200 L7.600 9.900Z" fill="#cbd6e2"/></svg>
<div class="t" style="left:1011.80px;top:880.84px;font-size:12px;line-height:16px;color:#33475b;transform:scaleX(0.9911);transform-origin:0 0;">CONTACT</div>
<div class="t" style="left:1051.90px;top:894.94px;font-size:12px;line-height:16px;color:#33475b;transform:scaleX(1.0029);transform-origin:0 0;">TO</div>
<div class="t" style="left:1002.30px;top:909.04px;font-size:12px;line-height:16px;color:#33475b;transform:scaleX(0.9657);transform-origin:0 0;">CUSTOMER</div>
<div class="t" style="left:1039.50px;top:923.14px;font-size:12px;line-height:16px;color:#33475b;transform:scaleX(0.9288);transform-origin:0 0;">RATE</div>
<svg style="position:absolute;left:1073.6px;top:901px" width="9" height="17" viewBox="0 0 9 17"><path d="M0.400 6 L4 0.700 L7.600 6Z" fill="#cbd6e2"/><path d="M0.400 9.900 L4 15.200 L7.600 9.900Z" fill="#cbd6e2"/></svg>
<div class="t" style="left:1130.90px;top:901.84px;font-size:12px;line-height:16px;color:#33475b;transform:scaleX(0.9339);transform-origin:0 0;">CUSTOMERS</div>
<svg style="position:absolute;left:1208.6px;top:900px" width="9" height="17" viewBox="0 0 9 17"><path d="M0.400 6 L4 0.700 L7.600 6Z" fill="#cbd6e2"/><path d="M0.400 9.900 L4 15.200 L7.600 9.900Z" fill="#cbd6e2"/></svg>
<div class="t" style="left:1272.30px;top:894.94px;font-size:12px;line-height:16px;color:#33475b;transform:scaleX(0.9857);transform-origin:0 0;">BOUNCE</div>
<div class="t" style="left:1294.30px;top:909.04px;font-size:12px;line-height:16px;color:#33475b;transform:scaleX(0.9191);transform-origin:0 0;">RATE</div>
<svg style="position:absolute;left:1328.7px;top:901px" width="9" height="17" viewBox="0 0 9 17"><path d="M0.400 6 L4 0.700 L7.600 6Z" fill="#cbd6e2"/><path d="M0.400 9.900 L4 15.200 L7.600 9.900Z" fill="#cbd6e2"/></svg>
<div class="t" style="left:1393.70px;top:894.94px;font-size:12px;line-height:16px;color:#33475b;transform:scaleX(0.9091);transform-origin:0 0;">SESSION</div>
<div class="t" style="left:1397.30px;top:909.04px;font-size:12px;line-height:16px;color:#33475b;transform:scaleX(0.9225);transform-origin:0 0;">LENGTH</div>
<svg style="position:absolute;left:1448.7px;top:901px" width="9" height="17" viewBox="0 0 9 17"><path d="M0.400 6 L4 0.700 L7.600 6Z" fill="#cbd6e2"/><path d="M0.400 9.900 L4 15.200 L7.600 9.900Z" fill="#cbd6e2"/></svg>
<div class="t" style="left:292.50px;top:972.40px;font-size:14px;line-height:18px;color:#0091ae;letter-spacing:0.159px;-webkit-text-stroke:0.12px #0091ae;">Organic search</div>
<div class="t" style="left:683.75px;top:971.15px;font-size:14px;line-height:18px;color:#33475b;letter-spacing:-0.301px;">856</div>
<div class="t" style="left:787.50px;top:971.15px;font-size:14px;line-height:18px;color:#33475b;letter-spacing:-0.235px;">0.47%</div>
<div class="t" style="left:944.72px;top:972.40px;font-size:14px;line-height:18px;color:#0091ae;">4</div>
<div class="t" style="left:1061.40px;top:971.15px;font-size:14px;line-height:18px;color:#33475b;letter-spacing:-1.430px;">0%</div>
<div class="t" style="left:1208.22px;top:972.40px;font-size:14px;line-height:18px;color:#0091ae;">0</div>
<div class="t" style="left:1288.30px;top:971.15px;font-size:14px;line-height:18px;color:#33475b;letter-spacing:-0.118px;">85.16%</div>
<div class="t" style="left:1384.80px;top:971.15px;font-size:14px;line-height:18px;color:#33475b;letter-spacing:-0.046px;">39 seconds</div>
<div class="t" style="left:292.50px;top:1028.40px;font-size:14px;line-height:18px;color:#0091ae;letter-spacing:0.333px;-webkit-text-stroke:0.12px #0091ae;">Direct traffic</div>
<div class="t" style="left:683.75px;top:1027.15px;font-size:14px;line-height:18px;color:#33475b;letter-spacing:-0.301px;">392</div>
<div class="t" style="left:787.50px;top:1027.15px;font-size:14px;line-height:18px;color:#33475b;letter-spacing:-0.235px;">8.16%</div>
<div class="t" style="left:937.50px;top:1028.40px;font-size:14px;line-height:18px;color:#0091ae;letter-spacing:-0.568px;">32</div>
<div class="t" style="left:1061.40px;top:1027.15px;font-size:14px;line-height:18px;color:#33475b;letter-spacing:-1.430px;">0%</div>
<div class="t" style="left:1208.22px;top:1028.40px;font-size:14px;line-height:18px;color:#0091ae;">0</div>
<div class="t" style="left:1288.30px;top:1027.15px;font-size:14px;line-height:18px;color:#33475b;letter-spacing:-0.118px;">69.13%</div>
<div class="t" style="left:1433.00px;top:1018.15px;font-size:14px;line-height:18px;color:#33475b;letter-spacing:-0.058px;">112</div>
<div class="t" style="left:1403.50px;top:1036.15px;font-size:14px;line-height:18px;color:#33475b;letter-spacing:0.058px;">seconds</div>
<div class="t" style="left:292.50px;top:1084.40px;font-size:14px;line-height:18px;color:#0091ae;letter-spacing:-0.037px;-webkit-text-stroke:0.12px #0091ae;">Referrals</div>
<div class="t" style="left:691.25px;top:1083.15px;font-size:14px;line-height:18px;color:#33475b;letter-spacing:-0.318px;">67</div>
<div class="t" style="left:788.00px;top:1083.15px;font-size:14px;line-height:18px;color:#33475b;letter-spacing:-0.360px;">1.49%</div>
<div class="t" style="left:943.47px;top:1084.40px;font-size:14px;line-height:18px;color:#0091ae;">1</div>
<div class="t" style="left:1061.40px;top:1083.15px;font-size:14px;line-height:18px;color:#33475b;letter-spacing:-1.430px;">0%</div>
<div class="t" style="left:1208.22px;top:1084.40px;font-size:14px;line-height:18px;color:#0091ae;">0</div>
<div class="t" style="left:1288.30px;top:1083.15px;font-size:14px;line-height:18px;color:#33475b;letter-spacing:-0.118px;">53.73%</div>
<div class="t" style="left:1433.00px;top:1074.15px;font-size:14px;line-height:18px;color:#33475b;letter-spacing:0.460px;">111</div>
<div class="t" style="left:1403.50px;top:1092.15px;font-size:14px;line-height:18px;color:#33475b;letter-spacing:0.058px;">seconds</div>
<div class="t" style="left:292.50px;top:1140.40px;font-size:14px;line-height:18px;color:#0091ae;letter-spacing:0.212px;-webkit-text-stroke:0.12px #0091ae;">Social media</div>
<div class="t" style="left:698.72px;top:1139.15px;font-size:14px;line-height:18px;color:#33475b;">8</div>
<div class="t" style="left:807.50px;top:1139.15px;font-size:14px;line-height:18px;color:#33475b;letter-spacing:-1.480px;">0%</div>
<div class="t" style="left:944.72px;top:1140.40px;font-size:14px;line-height:18px;color:#0091ae;">0</div>
<div class="t" style="left:1061.40px;top:1139.15px;font-size:14px;line-height:18px;color:#33475b;letter-spacing:-1.430px;">0%</div>
<div class="t" style="left:1208.22px;top:1140.40px;font-size:14px;line-height:18px;color:#0091ae;">0</div>
<div class="t" style="left:1308.40px;top:1139.15px;font-size:14px;line-height:18px;color:#33475b;letter-spacing:-0.607px;">50%</div>
<div class="t" style="left:1384.80px;top:1139.15px;font-size:14px;line-height:18px;color:#33475b;letter-spacing:-0.046px;">43 seconds</div>
<div class="t" style="left:292.50px;top:1201.65px;font-size:14px;line-height:18px;color:#33475b;letter-spacing:-0.099px;font-weight:700;-webkit-text-stroke:0.15px #fff;">Total</div>
<div class="t" style="left:667.50px;top:1201.65px;font-size:14px;line-height:18px;color:#33475b;letter-spacing:0.743px;font-weight:700;-webkit-text-stroke:0.15px #fff;">1,323</div>
<div class="t" style="left:792.50px;top:1201.65px;font-size:14px;line-height:18px;color:#33475b;letter-spacing:0.615px;font-weight:700;-webkit-text-stroke:0.15px #fff;">2.8%</div>
<div class="t" style="left:935.00px;top:1201.65px;font-size:14px;line-height:18px;color:#33475b;letter-spacing:1.182px;font-weight:700;-webkit-text-stroke:0.15px #fff;">37</div>
<div class="t" style="left:1059.60px;top:1201.65px;font-size:14px;line-height:18px;color:#33475b;letter-spacing:0.370px;font-weight:700;-webkit-text-stroke:0.15px #fff;">0%</div>
<div class="t" style="left:1207.72px;top:1201.65px;font-size:14px;line-height:18px;color:#33475b;font-weight:700;-webkit-text-stroke:0.15px #fff;">0</div>
<div class="t" style="left:1283.80px;top:1201.65px;font-size:14px;line-height:18px;color:#33475b;letter-spacing:0.782px;font-weight:700;-webkit-text-stroke:0.15px #fff;">78.61%</div>
<div class="t" style="left:1439.10px;top:1192.65px;font-size:14px;line-height:18px;color:#33475b;letter-spacing:0.032px;font-weight:700;-webkit-text-stroke:0.15px #fff;">65</div>
<div class="t" style="left:1403.50px;top:1210.65px;font-size:14px;line-height:18px;color:#33475b;letter-spacing:-0.716px;font-weight:700;-webkit-text-stroke:0.15px #fff;">seconds</div>
<div style="position:absolute;left:1616px;top:1274px;width:48px;height:51px;background:#6a78d1;border-radius:21px 21px 3px 21px;box-shadow:0 2px 12px rgba(45,62,80,0.2)"></div>
<div class="t" style="left:1626.40px;top:1290.85px;font-size:14px;line-height:18px;color:#ffffff;">Help</div>
</div></body></html>
